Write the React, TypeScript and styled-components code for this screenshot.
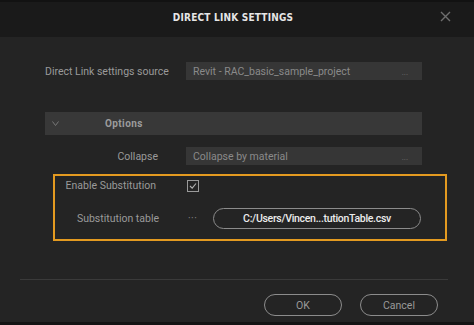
import React from 'react';
import styled, { createGlobalStyle } from 'styled-components';

const GlobalStyle = createGlobalStyle`
  html, body {
    margin: 0;
    padding: 0;
    background: #242424;
  }
  body {
    font-family: Roboto, "Liberation Sans", sans-serif;
  }
`;

const Dialog = styled.div`
  width: 474px;
  height: 325px;
  display: flex;
  flex-direction: column;
  background: #242424;
  overflow: hidden;
  border-bottom: 3px solid #141414;
  box-sizing: border-box;
`;

const Header = styled.div`
  height: 37px;
  flex: none;
  display: flex;
  align-items: center;
  justify-content: center;
  position: relative;
  background: #1a1a1a;
  border-top: 2px solid #121212;
  box-sizing: border-box;
`;

const Title = styled.div`
  font-family: "DejaVu Sans Condensed", "DejaVu Sans", sans-serif;
  font-weight: bold;
  font-size: 10px;
  letter-spacing: 0.2px;
  color: #e6e6e6;
  margin-left: -8px;
  margin-top: -4px;
`;

const CloseButton = styled.div`
  position: absolute;
  right: 23px;
  top: 9px;
  width: 11px;
  height: 11px;
  display: flex;
`;

const Body = styled.div`
  flex: 1;
  padding: 25px 52px 0 45px;
  display: flex;
  flex-direction: column;
`;

const Row = styled.div<{ $mt?: number }>`
  display: flex;
  align-items: center;
  margin-top: ${(p) => p.$mt ?? 0}px;
`;

const Label = styled.div<{ $w: number; $align?: string; $pr?: number }>`
  width: ${(p) => p.$w}px;
  flex: none;
  font-size: 10.5px;
  color: #9a9a9a;
  text-align: ${(p) => p.$align ?? 'left'};
  padding-right: ${(p) => p.$pr ?? 0}px;
  box-sizing: border-box;
  white-space: nowrap;
`;

const Field = styled.div`
  flex: 1;
  height: 18px;
  background: #363636;
  display: flex;
  align-items: center;
  justify-content: space-between;
  padding: 0 14px 0 7px;
  font-size: 10.5px;
  color: #8a8a8a;
`;

const Dots = styled.span`
  font-size: 8px;
  color: #707070;
  align-self: flex-end;
  padding-bottom: 3px;
`;

const Section = styled.div`
  margin-top: 32px;
  height: 23px;
  background: #383838;
  display: flex;
  align-items: center;
  padding-left: 7px;
`;

const SectionTitle = styled.div`
  margin-left: 46px;
  font-size: 10px;
  font-weight: bold;
  letter-spacing: 0.4px;
  color: #9c9c9c;
`;

const Highlight = styled.div`
  margin: 9px -25px 0 8px;
  height: 67px;
  border: 2px solid #e39a20;
  box-sizing: border-box;
  display: flex;
  flex-direction: column;
  padding: 0 24px 0 0;
`;

const Checkbox = styled.div`
  width: 10px;
  height: 10px;
  border: 1px solid #9a9a9a;
  display: flex;
  align-items: center;
  justify-content: center;
`;

const MoreDots = styled.div`
  width: 25px;
  flex: none;
  font-size: 10px;
  color: #8a8a8a;
  letter-spacing: 0.5px;
  padding-left: 1px;
`;

const PathButton = styled.div`
  flex: 1;
  height: 21px;
  border: 1.5px solid #8c8c8c;
  border-radius: 11px;
  box-sizing: border-box;
  display: flex;
  align-items: center;
  justify-content: center;
  font-size: 10.5px;
  font-weight: 500;
  letter-spacing: -0.3px;
  color: #ececec;
`;

const Footer = styled.div`
  flex: none;
  height: 43px;
  display: flex;
  flex-direction: column;
`;

const Separator = styled.div`
  height: 1px;
  margin: 0 26px 0 20px;
  background: #3a3a3a;
`;

const Buttons = styled.div`
  display: flex;
  justify-content: flex-end;
  gap: 18px;
  padding: 14px 36px 0 0;
`;

const Button = styled.div`
  width: 78px;
  height: 22px;
  border: 1.5px solid #8c8c8c;
  border-radius: 11px;
  box-sizing: border-box;
  display: flex;
  align-items: center;
  justify-content: center;
  font-size: 10.5px;
  color: #9a9a9a;
`;

const App: React.FC = () => {
  return (
    <Dialog>
      <GlobalStyle />
      <Header>
        <Title>DIRECT LINK SETTINGS</Title>
        <CloseButton>
          <svg width="11" height="11" viewBox="0 0 11 11">
            <path d="M1 1L10 10M10 1L1 10" stroke="#6e6e6e" strokeWidth="1.4" />
          </svg>
        </CloseButton>
      </Header>
      <Body>
        <Row>
          <Label $w={141}>Direct Link settings source</Label>
          <Field>
            <span>Revit - RAC_basic_sample_project</span>
            <Dots>...</Dots>
          </Field>
        </Row>
        <Section>
          <svg width="7" height="5" viewBox="0 0 7 5">
            <path d="M0.5 0.5L3.5 4.5L6.5 0.5" stroke="#767676" strokeWidth="1" fill="none" />
          </svg>
          <SectionTitle>Options</SectionTitle>
        </Section>
        <Row $mt={12}>
          <Label $w={141} $align="right" $pr={28}>Collapse</Label>
          <Field>
            <span>Collapse by material</span>
            <Dots>...</Dots>
          </Field>
        </Row>
        <Highlight>
          <Row $mt={3}>
            <Label $w={132} $align="right" $pr={31}>Enable Substitution</Label>
            <Checkbox>
              <svg width="8" height="8" viewBox="0 0 8 8">
                <path d="M1 4L3.2 6.2L7 1.5" stroke="#b0b0b0" strokeWidth="1.1" fill="none" />
              </svg>
            </Checkbox>
          </Row>
          <Row $mt={16}>
            <Label $w={132} $align="right" $pr={28}>Substitution table</Label>
            <MoreDots>···</MoreDots>
            <PathButton>C:/Users/Vincen...tutionTable.csv</PathButton>
          </Row>
        </Highlight>
      </Body>
      <Footer>
        <Separator />
        <Buttons>
          <Button>OK</Button>
          <Button>Cancel</Button>
        </Buttons>
      </Footer>
    </Dialog>
  );
};

export default App;
